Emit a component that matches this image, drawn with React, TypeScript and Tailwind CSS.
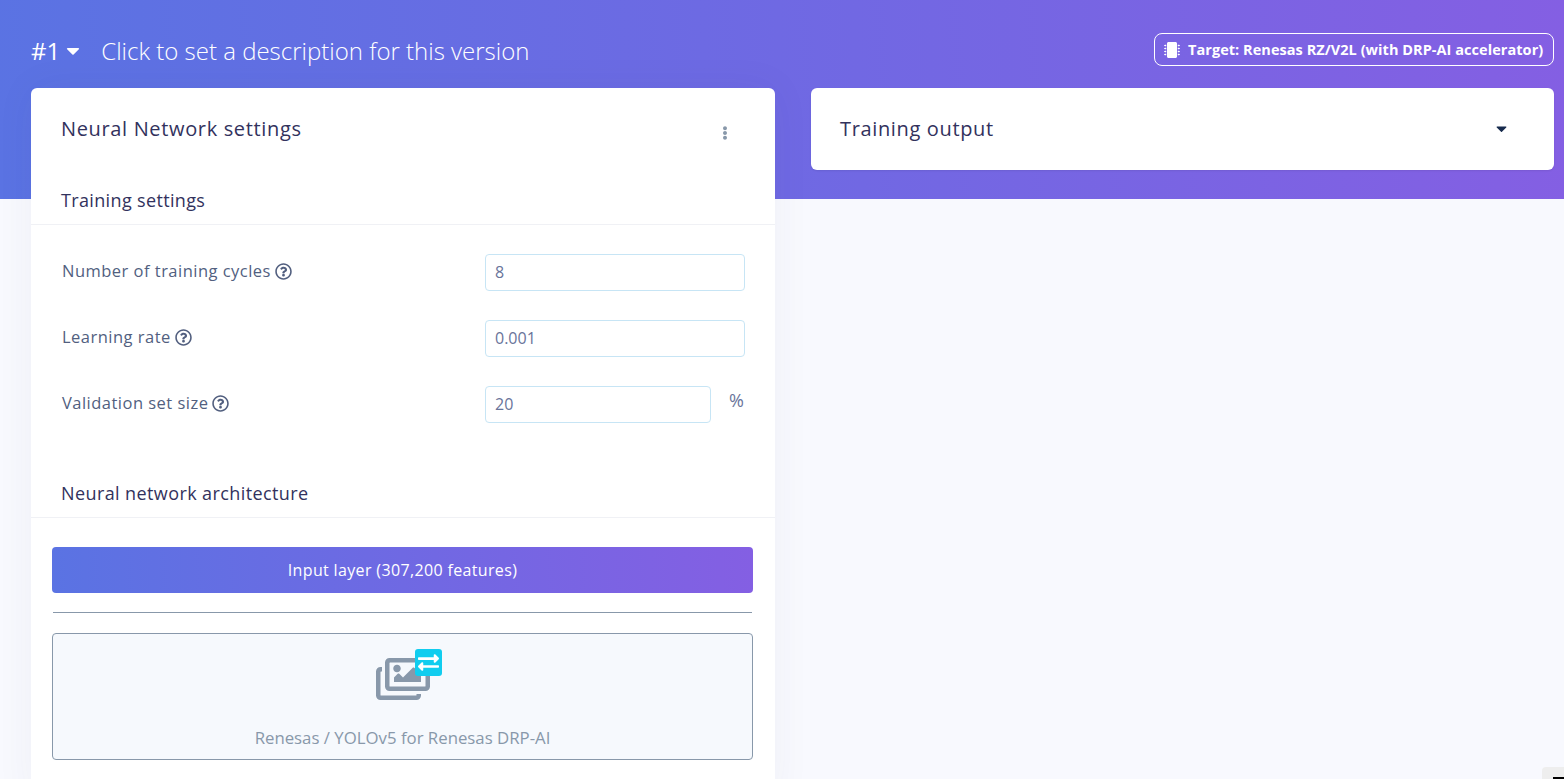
import { FaCaretDown, FaEllipsisV, FaExchangeAlt, FaMicrochip, FaRegImages, FaRegQuestionCircle } from 'react-icons/fa';

const fields = [
  { label: 'Number of training cycles', value: '8' },
  { label: 'Learning rate', value: '0.001' },
  { label: 'Validation set size', value: '20', unit: '%' },
];

function FieldRow({ label, value, unit }: { label: string; value: string; unit?: string }) {
  return (
    <div className="flex h-[37px] items-start">
      <label className="ml-[31px] flex w-[423px] items-center gap-[4px] text-[16.5px] leading-[34px] font-medium tracking-[0.48px] text-[#525f7f]">
        {label}
        <FaRegQuestionCircle className="h-[17px] w-[17px]" />
      </label>
      {unit ? (
        <div className="flex w-[260px]">
          <input
            readOnly
            value={value}
            className="h-[37px] w-[226px] rounded-[4px] border border-[#c7e5f5] bg-white px-[9px] pb-[2px] text-[16px] text-[#69749a] outline-none"
          />
          <span className="ml-[18px] text-[18px] leading-[28px] text-[#69749a]">{unit}</span>
        </div>
      ) : (
        <input
          readOnly
          value={value}
          className="h-[37px] w-[260px] rounded-[4px] border border-[#c7e5f5] bg-white px-[9px] pb-[2px] text-[16px] text-[#69749a] outline-none"
        />
      )}
    </div>
  );
}

export default function App() {
  return (
    <div className="relative h-[779px] overflow-hidden bg-[#f8f9fe] bg-[linear-gradient(87deg,#5a73e3,#845fe3)] bg-[size:100%_199px] bg-no-repeat font-['Open_Sans',sans-serif]">
      <div className="flex h-[88px] items-start pt-[34px] pr-[10px] pl-[31px]">
        <span className="text-[24px] leading-[33px] font-medium text-white">#1</span>
        <FaCaretDown className="mt-[6px] ml-[5px] h-[21px] w-[16px] text-white" />
        <span className="ml-[20px] text-[24px] leading-[33px] font-light text-white">
          Click to set a description for this version
        </span>
        <div className="mt-[-1px] ml-auto flex h-[33px] w-[400px] items-center rounded-[8px] border border-white pl-[9px] text-[14.5px] font-bold tracking-[0.05px] text-white">
          <FaMicrochip className="h-[16px] w-[16px]" />
          <span className="ml-[8px] whitespace-nowrap">Target: Renesas RZ/V2L (with DRP-AI accelerator)</span>
        </div>
      </div>

      <div className="flex items-start gap-[36px] pr-[10px] pl-[31px]">
        <div className="w-[744px] shrink-0 rounded-t-[6px] bg-white pb-[40px] shadow-[0_0_40px_rgba(50,50,93,0.05)]">
          <div className="flex h-[83px] items-start justify-between pt-[25px] pr-[43px] pl-[30px]">
            <h2 className="text-[20px] leading-[32px] font-medium tracking-[0.65px] text-[#32325d]">Neural Network settings</h2>
            <FaEllipsisV className="mt-[13px] h-[14px] w-[14px] text-[#8898aa]" />
          </div>
          <h3 className="h-[54px] border-b border-[#f0f1f5] pt-[16px] pl-[30px] text-[18px] leading-[26px] font-medium tracking-[0.35px] text-[#32325d]">
            Training settings
          </h3>
          <div className="flex flex-col gap-[29px] pt-[29px]">
            {fields.map((field) => (
              <FieldRow key={field.label} {...field} />
            ))}
          </div>
          <h3 className="mt-[57px] h-[38px] border-b border-[#f0f1f5] pl-[30px] text-[18px] leading-[26px] font-medium tracking-[0.4px] text-[#32325d]">
            Neural network architecture
          </h3>
          <div className="flex flex-col pt-[29px] pl-[21px] pr-[22px]">
            <div className="flex h-[46px] items-center justify-center rounded-[4px] bg-[linear-gradient(87deg,#5a73e3,#845fe3)] text-[16px] font-medium tracking-[0.35px] text-white">
              Input layer (307,200 features)
            </div>
            <div className="mt-[19px] ml-[1px] h-px w-[699px] bg-[#8898aa]" />
            <div className="mt-[20px] flex h-[127px] flex-col items-center rounded-[4px] border border-[#8898aa] bg-[#f6f9fd]">
              <div className="relative mt-[15px] ml-[13px] h-[50px] w-[66px]">
                <FaRegImages className="absolute top-[6px] left-0 h-[48px] w-[54px] text-[#8898aa]" />
                <div className="absolute top-0 right-0 flex h-[27px] w-[27px] items-center justify-center rounded-[3px] bg-[#11cdef]">
                  <FaExchangeAlt className="h-[21px] w-[21px] text-white" />
                </div>
              </div>
              <span className="mt-[27px] text-[16.8px] leading-[24px] text-[#8898aa]">
                Renesas / YOLOv5 for Renesas DRP-AI
              </span>
            </div>
          </div>
        </div>

        <div className="flex h-[82px] w-[743px] items-center justify-between rounded-[6px] bg-white pr-[46px] pl-[29px] shadow-[0_1px_2px_rgba(0,0,0,0.08)]">
          <h2 className="mb-[1px] text-[20px] font-medium tracking-[0.65px] text-[#32325d]">Training output</h2>
          <FaCaretDown className="mb-[2px] h-[17px] w-[13px] text-[#172b4d]" />
        </div>
      </div>

      {/* little widget peeking in at the bottom corner */}
      <div className="absolute right-0 bottom-0 h-[12px] w-[22px] rounded-tl-[4px] bg-[#eeeeee]">
        <div className="absolute top-[10px] left-[11px] h-[2px] w-[11px] bg-black" />
      </div>
    </div>
  );
}
